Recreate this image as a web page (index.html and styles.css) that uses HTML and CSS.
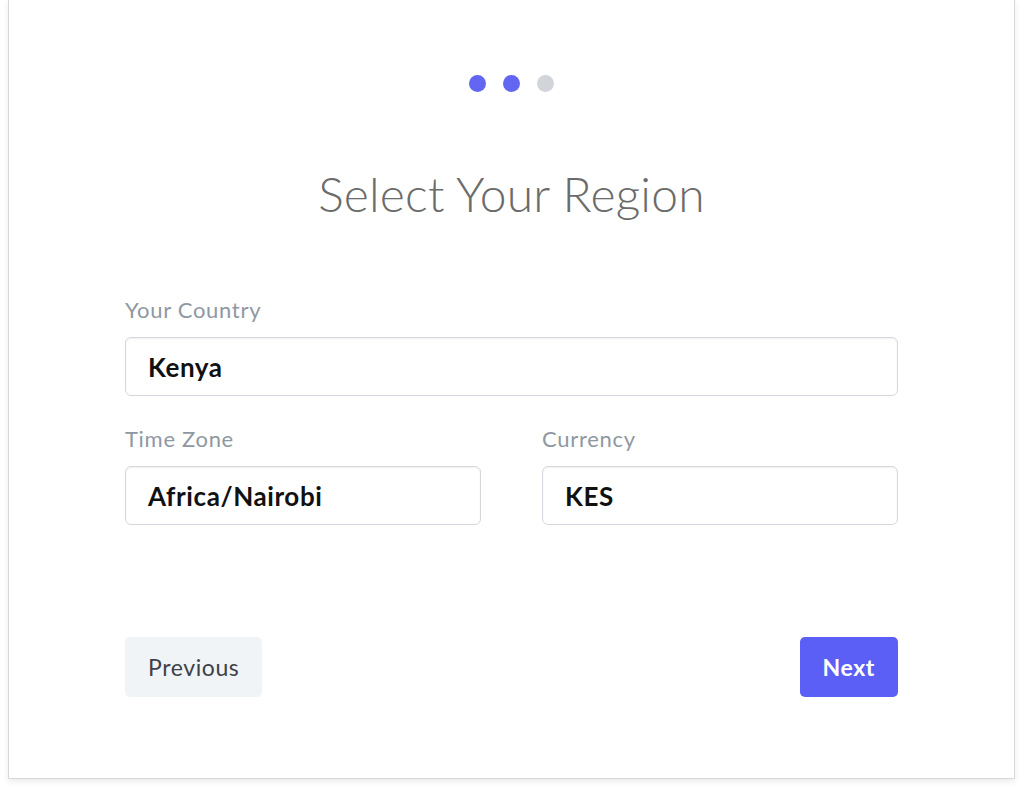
FILE: index.html
```html
<!DOCTYPE html>
<html lang="en">
<head>
<meta charset="utf-8">
<link rel="stylesheet" href="styles.css">
</head>
<body>
<div class="card">
  <div class="steps">
    <span class="dot active"></span>
    <span class="dot active"></span>
    <span class="dot"></span>
  </div>
  <h1 class="title">Select Your Region</h1>
  <div class="form">
    <div class="field">
      <label class="label">Your Country</label>
      <div class="input">Kenya</div>
    </div>
    <div class="row">
      <div class="field">
        <label class="label">Time Zone</label>
        <div class="input">Africa/Nairobi</div>
      </div>
      <div class="field">
        <label class="label">Currency</label>
        <div class="input">KES</div>
      </div>
    </div>
  </div>
  <div class="actions">
    <button class="btn btn-prev">Previous</button>
    <button class="btn btn-next">Next</button>
  </div>
</div>
</body>
</html>
```
FILE: styles.css
```css
html, body {
  margin: 0;
  padding: 0;
  background: #ffffff;
}
body {
  font-family: "Lato", "Open Sans", sans-serif;
  width: 1024px;
  height: 790px;
  overflow: hidden;
}
.card {
  box-sizing: border-box;
  margin: -2px 0 0 8px;
  width: 1007px;
  height: 781px;
  border: 1px solid #d6d9dc;
  background: #fff;
  box-shadow: 0 3px 6px rgba(0, 0, 0, 0.08);
  padding: 76px 116px 0 116px;
  display: flex;
  flex-direction: column;
}
.steps {
  display: flex;
  justify-content: center;
  gap: 17px;
}
.dot {
  width: 17px;
  height: 17px;
  border-radius: 50%;
  background: #d1d5da;
}
.dot.active {
  background: #6366f1;
}
.title {
  margin: 72px 0 0 0;
  text-align: center;
  font-weight: 300;
  font-size: 48px;
  line-height: 60px;
  color: #6b6b6b;
  letter-spacing: 0.2px;
}
.form {
  margin-top: 72px;
  display: flex;
  flex-direction: column;
  gap: 29px;
}
.row {
  display: flex;
  gap: 61px;
}
.row .field {
  flex: 1;
}
.field {
  display: flex;
  flex-direction: column;
}
.label {
  font-size: 22px;
  line-height: 28px;
  letter-spacing: 0.7px;
  color: #8e98a2;
  margin-bottom: 13px;
}
.input {
  box-sizing: border-box;
  height: 59px;
  border: 1px solid #d4d8dc;
  border-radius: 6px;
  box-shadow: inset 0 1px 2px rgba(0, 0, 0, 0.06);
  padding: 0 22px;
  display: flex;
  align-items: center;
  font-size: 26px;
  font-weight: 700;
  letter-spacing: 0.6px;
  color: #111;
}
.actions {
  margin-top: 112px;
  display: flex;
  justify-content: space-between;
}
.btn {
  font-family: inherit;
  height: 60px;
  border: none;
  border-radius: 5px;
  font-size: 23px;
  letter-spacing: 0.6px;
  padding: 0 23px;
  cursor: pointer;
}
.btn-prev {
  background: #f1f4f7;
  color: #3d4148;
}
.btn-next {
  background: #5b5ff5;
  color: #fff;
  font-weight: 700;
}
```
